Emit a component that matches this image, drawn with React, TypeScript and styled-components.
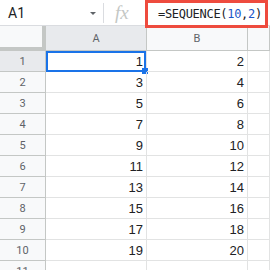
import React from 'react';
import styled, { createGlobalStyle } from 'styled-components';

const GlobalStyle = createGlobalStyle`
  html, body {
    margin: 0;
    padding: 0;
    background: #ffffff;
    overflow: hidden;
  }
  * {
    box-sizing: border-box;
  }
`;

const Page = styled.div`
  width: 270px;
  height: 270px;
  overflow: hidden;
  font-family: 'Liberation Sans', Arial, sans-serif;
`;

const FormulaBar = styled.div`
  display: flex;
  align-items: flex-start;
  height: 26px;
  border-bottom: 1px solid #dadce0;
  background: #ffffff;
`;

const NameBox = styled.div`
  width: 103px;
  height: 25px;
  display: flex;
  align-items: center;
  justify-content: space-between;
  padding: 0 7px 0 8px;
  font-family: Roboto, 'Liberation Sans', sans-serif;
  font-size: 14px;
  color: #202124;
`;

const Caret = styled.span`
  width: 0;
  height: 0;
  border-left: 3.5px solid transparent;
  border-right: 3.5px solid transparent;
  border-top: 3.5px solid #5f6368;
  margin-top: 1px;
`;

const Divider = styled.div`
  width: 1px;
  height: 20px;
  margin-top: 3px;
  background: #dadce0;
`;

const FxLabel = styled.div`
  width: 41px;
  height: 25px;
  display: flex;
  align-items: center;
  padding-left: 11px;
  font-family: 'Liberation Serif', serif;
  font-style: italic;
  font-size: 19px;
  color: #c4c7c5;
`;

const FormulaBox = styled.div`
  position: relative;
  z-index: 2;
  width: 123px;
  height: 28px;
  border: 3px solid #ee4b3e;
  display: flex;
  align-items: center;
  padding-left: 10px;
  font-family: 'DejaVu Sans Mono', monospace;
  font-size: 12px;
  letter-spacing: -0.3px;
  color: #202124;
  white-space: nowrap;
`;

const Arg = styled.span`
  color: #1a56c8;
`;

const Grid = styled.div`
  display: grid;
  grid-template-columns: 46px 101px 101px 1fr;
  grid-auto-rows: 21px;
  grid-template-rows: 25px;
`;

const Corner = styled.div`
  background: #f8f9fa;
  border-right: 4px solid #c4c7c5;
  border-bottom: 4px solid #c4c7c5;
`;

const ColHeader = styled.div<{ $active?: boolean }>`
  background: ${(p) => (p.$active ? '#e8eaed' : '#f8f9fa')};
  border-right: 1px solid #c4c7c5;
  border-bottom: 1px solid #c4c7c5;
  display: flex;
  align-items: center;
  justify-content: center;
  font-family: Roboto, 'Liberation Sans', sans-serif;
  font-size: 11px;
  color: #5f6368;
`;

const RowHeader = styled.div<{ $active?: boolean }>`
  background: ${(p) => (p.$active ? '#e8eaed' : '#f8f9fa')};
  border-right: 1px solid #c4c7c5;
  border-bottom: 1px solid #c4c7c5;
  display: flex;
  align-items: center;
  justify-content: center;
  font-family: Roboto, 'Liberation Sans', sans-serif;
  font-size: 11px;
  color: #5f6368;
`;

const Cell = styled.div`
  position: relative;
  border-right: 1px solid #e2e3e3;
  border-bottom: 1px solid #e2e3e3;
  display: flex;
  align-items: center;
  justify-content: flex-end;
  padding-right: 3px;
  font-size: 13px;
  color: #202124;
`;

const Selection = styled.div`
  position: absolute;
  top: 0;
  left: 0;
  right: 0;
  bottom: -1px;
  border: 2px solid #1a73e8;
  pointer-events: none;
`;

const FillHandle = styled.div`
  position: absolute;
  right: -4px;
  bottom: -4px;
  width: 6px;
  height: 6px;
  background: #1a73e8;
`;

const rows = Array.from({ length: 11 }, (_, i) => i + 1);

export default function App() {
  return (
    <>
      <GlobalStyle />
      <Page>
        <FormulaBar>
          <NameBox>
            A1
            <Caret />
          </NameBox>
          <Divider />
          <FxLabel>fx</FxLabel>
          <FormulaBox>
            =SEQUENCE(<Arg>10</Arg>,<Arg>2</Arg>)
          </FormulaBox>
        </FormulaBar>
        <Grid>
          <Corner />
          <ColHeader $active>A</ColHeader>
          <ColHeader>B</ColHeader>
          <ColHeader />
          {rows.map((r) => (
            <React.Fragment key={r}>
              <RowHeader $active={r === 1}>{r}</RowHeader>
              <Cell>
                {r <= 10 ? r * 2 - 1 : ''}
                {r === 1 && (
                  <Selection>
                    <FillHandle />
                  </Selection>
                )}
              </Cell>
              <Cell>{r <= 10 ? r * 2 : ''}</Cell>
              <Cell />
            </React.Fragment>
          ))}
        </Grid>
      </Page>
    </>
  );
}
